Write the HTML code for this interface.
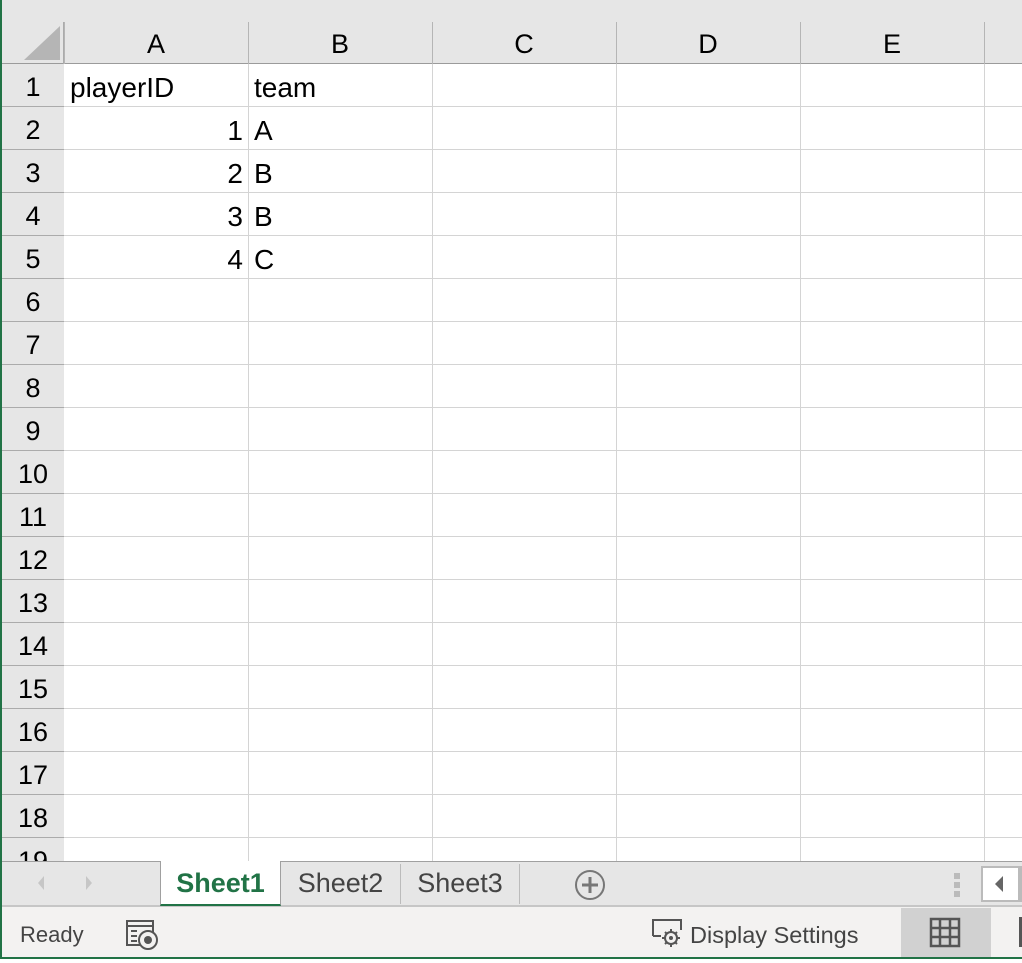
<!DOCTYPE html>
<html><head><style>
*{margin:0;padding:0;box-sizing:border-box}
body{width:1022px;height:959px;overflow:hidden;background:#fff;position:relative;font-family:"Liberation Sans",sans-serif;color:#000}
.a{position:absolute}
.vl{position:absolute;top:64px;height:797px;width:1px;background:#d4d4d4}
.hl{position:absolute;left:64px;width:958px;height:1px;background:#d4d4d4}
.rh{position:absolute;left:2px;width:62px;height:43px;text-align:center;font-size:27px;line-height:46px;background:#e6e6e6;border-bottom:1px solid #ababab}
.ch{position:absolute;top:22px;height:42px;text-align:center;font-size:27px;line-height:44px}
.cs{position:absolute;top:22px;height:42px;width:1px;background:#b5b5b5}
.c{position:absolute;font-size:28px;line-height:46px;height:43px}
</style></head><body>
<div class="a" style="left:0;top:0;width:1022px;height:64px;background:#e6e6e6"></div>
<div class="a" style="left:0;top:63px;width:1022px;height:1px;background:#9b9b9b"></div>
<svg class="a" style="left:20px;top:24px" width="42" height="38"><polygon points="40,2 40,36 4,36" fill="#b5b5b5"/></svg>
<div class="cs" style="left:64px"></div><div class="cs" style="left:248px"></div><div class="cs" style="left:432px"></div><div class="cs" style="left:616px"></div><div class="cs" style="left:800px"></div><div class="cs" style="left:984px"></div>
<div class="ch" style="left:64px;width:184px">A</div>
<div class="ch" style="left:248px;width:184px">B</div>
<div class="ch" style="left:432px;width:184px">C</div>
<div class="ch" style="left:616px;width:184px">D</div>
<div class="ch" style="left:800px;width:184px">E</div>
<div class="vl" style="left:248px"></div><div class="vl" style="left:432px"></div><div class="vl" style="left:616px"></div><div class="vl" style="left:800px"></div><div class="vl" style="left:984px"></div>
<div class="hl" style="top:106px"></div><div class="hl" style="top:149px"></div><div class="hl" style="top:192px"></div><div class="hl" style="top:235px"></div><div class="hl" style="top:278px"></div><div class="hl" style="top:321px"></div><div class="hl" style="top:364px"></div><div class="hl" style="top:407px"></div><div class="hl" style="top:450px"></div><div class="hl" style="top:493px"></div><div class="hl" style="top:536px"></div><div class="hl" style="top:579px"></div><div class="hl" style="top:622px"></div><div class="hl" style="top:665px"></div><div class="hl" style="top:708px"></div><div class="hl" style="top:751px"></div><div class="hl" style="top:794px"></div><div class="hl" style="top:837px"></div>
<div class="a" style="left:2px;top:64px;width:62px;height:797px;background:#e6e6e6"></div>
<div class="a" style="left:63px;top:22px;width:1px;height:839px;background:#ababab"></div>
<div class="rh" style="top:64px">1</div><div class="rh" style="top:107px">2</div><div class="rh" style="top:150px">3</div><div class="rh" style="top:193px">4</div><div class="rh" style="top:236px">5</div><div class="rh" style="top:279px">6</div><div class="rh" style="top:322px">7</div><div class="rh" style="top:365px">8</div><div class="rh" style="top:408px">9</div><div class="rh" style="top:451px">10</div><div class="rh" style="top:494px">11</div><div class="rh" style="top:537px">12</div><div class="rh" style="top:580px">13</div><div class="rh" style="top:623px">14</div><div class="rh" style="top:666px">15</div><div class="rh" style="top:709px">16</div><div class="rh" style="top:752px">17</div><div class="rh" style="top:795px">18</div><div class="rh" style="top:838px;height:23px;overflow:hidden;border:none">19</div>
<div class="c" style="left:70px;top:65px">playerID</div>
<div class="c" style="left:254px;top:65px">team</div>
<div class="c" style="left:64px;width:179px;text-align:right;top:108px">1</div><div class="c" style="left:254px;top:108px">A</div>
<div class="c" style="left:64px;width:179px;text-align:right;top:151px">2</div><div class="c" style="left:254px;top:151px">B</div>
<div class="c" style="left:64px;width:179px;text-align:right;top:194px">3</div><div class="c" style="left:254px;top:194px">B</div>
<div class="c" style="left:64px;width:179px;text-align:right;top:237px">4</div><div class="c" style="left:254px;top:237px">C</div>
<div class="a" style="left:0;top:861px;width:1022px;height:46px;background:#e6e6e6;border-top:1px solid #a0a0a0;border-bottom:2px solid #c6c6c6"></div>
<svg class="a" style="left:30px;top:872px" width="70" height="22"><polygon points="14,4 14,18 8,11" fill="#c6c6c6"/><polygon points="56,4 56,18 62,11" fill="#c6c6c6"/></svg>
<div class="a" style="left:160px;top:861px;width:121px;height:45px;background:#fff;border-left:1px solid #a0a0a0;border-right:1px solid #a0a0a0;border-bottom:2px solid #217346;color:#217346;font-weight:bold;font-size:27px;text-align:center;line-height:44px">Sheet1</div>
<div class="a" style="left:281px;top:864px;width:120px;height:40px;color:#444;font-size:27px;text-align:center;line-height:38px;border-right:1px solid #bbb">Sheet2</div>
<div class="a" style="left:401px;top:864px;width:119px;height:40px;color:#444;font-size:27px;text-align:center;line-height:38px;border-right:1px solid #bbb">Sheet3</div>
<svg class="a" style="left:573px;top:868px" width="34" height="34"><circle cx="17" cy="17" r="14" fill="none" stroke="#777" stroke-width="2"/><path d="M17 9v16M9 17h16" stroke="#777" stroke-width="3"/></svg>
<div class="a" style="left:954px;top:873px;width:6px;height:6px;background:#bbb"></div>
<div class="a" style="left:954px;top:882px;width:6px;height:6px;background:#bbb"></div>
<div class="a" style="left:954px;top:891px;width:6px;height:6px;background:#bbb"></div>
<div class="a" style="left:981px;top:866px;width:41px;height:36px;background:#fff;border:2px solid #bbb"></div>
<svg class="a" style="left:993px;top:874px" width="14" height="20"><polygon points="10,2 10,18 2,10" fill="#666"/></svg>
<div class="a" style="left:1018px;top:866px;width:4px;height:36px;background:#bbb"></div>
<div class="a" style="left:0;top:907px;width:1022px;height:50px;background:#f3f2f1"></div>
<div class="a" style="left:20px;top:907px;font-size:22px;line-height:56px;color:#444">Ready</div>
<svg class="a" style="left:125px;top:919px" width="36" height="32"><rect x="2" y="2" width="26" height="24" fill="none" stroke="#555" stroke-width="2"/><path d="M2 7h26M6 12h6M6 17h6M6 22h6" stroke="#555" stroke-width="2"/><circle cx="23" cy="21" r="9" fill="#f3f2f1" stroke="#555" stroke-width="2"/><circle cx="23" cy="21" r="4" fill="#555"/></svg>
<svg class="a" style="left:651px;top:918px" width="36" height="30"><path d="M2 18V2h28v10" fill="none" stroke="#555" stroke-width="2"/><path d="M2 18h8" stroke="#555" stroke-width="2"/><circle cx="20" cy="20" r="6" fill="none" stroke="#555" stroke-width="2"/><circle cx="20" cy="20" r="2" fill="#555"/><path d="M20 11v3M20 26v3M11 20h3M26 20h3M14 14l2 2M24 24l2 2M26 14l-2 2M14 26l2-2" stroke="#555" stroke-width="2"/></svg>
<div class="a" style="left:690px;top:907px;font-size:23.5px;line-height:56px;color:#444">Display Settings</div>
<div class="a" style="left:901px;top:908px;width:90px;height:49px;background:#d1d1d1"></div>
<svg class="a" style="left:929px;top:917px" width="32" height="32"><rect x="2" y="2" width="28" height="27" fill="none" stroke="#555" stroke-width="2.5"/><path d="M11 2v27M21 2v27M2 11h28M2 20h28" stroke="#555" stroke-width="2.5"/></svg>
<div class="a" style="left:1019px;top:917px;width:3px;height:30px;background:#555"></div>
<div class="a" style="left:0;top:957px;width:1022px;height:2px;background:#217346"></div>
<div class="a" style="left:0;top:0;width:2px;height:959px;background:#217346"></div>
</body></html>
